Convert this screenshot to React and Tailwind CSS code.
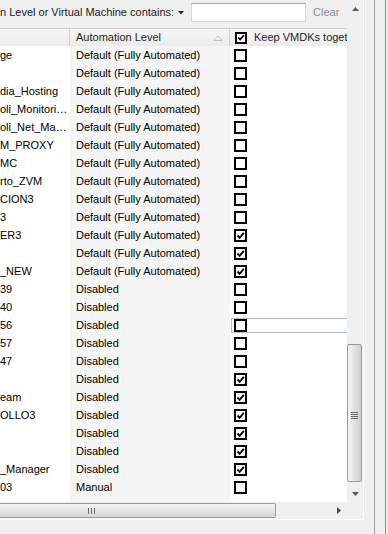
import React from 'react';

const DEF = 'Default (Fully Automated)';

const rows = [
  ['ge', DEF, false],
  ['', DEF, false],
  ['dia_Hosting', DEF, false],
  ['oli_Monitori…', DEF, false],
  ['oli_Net_Ma…', DEF, false],
  ['M_PROXY', DEF, false],
  ['MC', DEF, false],
  ['rto_ZVM', DEF, false],
  ['CION3', DEF, false],
  ['3', DEF, false],
  ['ER3', DEF, true],
  ['', DEF, true],
  ['_NEW', DEF, true],
  ['39', 'Disabled', false],
  ['40', 'Disabled', false],
  ['56', 'Disabled', false, true],
  ['57', 'Disabled', false],
  ['47', 'Disabled', false],
  ['', 'Disabled', true],
  ['eam', 'Disabled', true],
  ['OLLO3', 'Disabled', true],
  ['', 'Disabled', true],
  ['', 'Disabled', true],
  ['_Manager', 'Disabled', true],
  ['03', 'Manual', false],
];

function Check({ checked, small }) {
  return (
    <div className={`${small ? 'w-[12px] h-[12px]' : 'w-[13px] h-[13px]'} border-2 border-black bg-white flex items-center justify-center shrink-0`}>
      {checked && (
        <svg width="9" height="9" viewBox="0 0 9 9">
          <path d="M1.5 4.5 L3.6 6.8 L7.8 1.8" fill="none" stroke="#000" strokeWidth="1.9" />
        </svg>
      )}
    </div>
  );
}

function Row({ name, level, checked, focus }) {
  return (
    <div className="flex h-[18px] shrink-0">
      <div className="w-[70px] bg-white flex items-center overflow-hidden whitespace-nowrap text-black">{name}</div>
      <div className="w-[160px] bg-[#f5f5f5] flex items-center pl-[6px] text-black whitespace-nowrap">{level}</div>
      <div className="flex-1 bg-white flex items-center pl-[4px] relative">
        <Check checked={checked} />
        {focus && <div className="absolute left-[1px] right-0 top-[2px] bottom-[1px] border border-r-0 border-[#abbdd8]" />}
      </div>
    </div>
  );
}

export default function App() {
  return (
    <div className="w-[388px] h-[534px] bg-[#f0f0f0] flex overflow-hidden font-['Liberation_Sans',Arial,sans-serif] text-[11px] leading-none">
      {/* main panel */}
      <div className="w-[364px] h-[520px] flex border-r border-b border-white shrink-0">
        <div className="w-[347px] flex flex-col">
          {/* filter bar */}
          <div className="h-[28px] flex items-start shrink-0">
            <div className="h-[25px] flex items-center whitespace-nowrap text-[#1b1b1b]">
              n Level or Virtual Machine contains:
              <svg className="ml-[4px]" width="6" height="4" viewBox="0 0 6 4">
                <path d="M0 0 H6 L3 3.5 Z" fill="#222" />
              </svg>
            </div>
            <div className="ml-[7px] mt-[3px] w-[115px] h-[19px] bg-white border border-[#d6d9de] border-t-[#a6a6a6]" />
            <div className="ml-[7px] h-[25px] flex items-center text-[#8d8d8d]">Clear</div>
          </div>
          {/* header */}
          <div className="h-[18px] flex border-t border-[#cfcfcf] bg-gradient-to-b from-[#f7f7f7] to-[#ebebeb] shrink-0">
            <div className="w-[70px] border-r border-[#d2d2d2]" />
            <div className="w-[160px] border-r border-[#d2d2d2] flex items-center justify-between pl-[6px] pr-[6px] text-[#1e1e1e] whitespace-nowrap">
              Automation Level
              <svg width="10" height="6" viewBox="0 0 10 6">
                <path d="M0.5 5.5 L5 1 L9.5 5.5 Z" fill="none" stroke="#c4c4c4" strokeWidth="1" />
              </svg>
            </div>
            <div className="flex-1 flex items-center pl-[5px] overflow-hidden whitespace-nowrap text-[#1e1e1e]">
              <Check checked small />
              <span className="ml-[7px]">Keep VMDKs together</span>
            </div>
          </div>
          {/* body */}
          <div className="flex-1 flex flex-col overflow-hidden">
            {rows.map((r, i) => (
              <Row key={i} name={r[0]} level={r[1]} checked={r[2]} focus={r[3]} />
            ))}
            <div className="flex flex-1">
              <div className="w-[70px] bg-white" />
              <div className="w-[160px] bg-[#f5f5f5]" />
              <div className="flex-1 bg-white" />
            </div>
          </div>
          {/* horizontal scrollbar */}
          <div className="h-[17px] flex bg-[#f0f0f0] shrink-0">
            <div className="w-[276px] h-[15px] mt-[1px] border border-l-0 border-[#9a9a9a] rounded-r-[2px] bg-gradient-to-b from-[#f4f4f4] to-[#d6d6d6] flex items-center justify-center">
              <div className="flex gap-[2px] -ml-[92px]">
                <div className="w-px h-[6px] bg-[#6b6b6b]" />
                <div className="w-px h-[6px] bg-[#6b6b6b]" />
                <div className="w-px h-[6px] bg-[#6b6b6b]" />
              </div>
            </div>
            <div className="flex-1" />
            <div className="w-[17px] flex items-center justify-center">
              <svg width="4" height="7" viewBox="0 0 4 7">
                <path d="M0 0 L4 3.5 L0 7 Z" fill="#4a4a4a" />
              </svg>
            </div>
          </div>
        </div>
        {/* vertical scrollbar */}
        <div className="w-[16px] flex flex-col">
          <div className="h-[502px] flex flex-col bg-[#f0f0f0]">
            <div className="h-[17px] flex items-center justify-center shrink-0">
              <svg width="7" height="4" viewBox="0 0 7 4">
                <path d="M0 4 L3.5 0 L7 4 Z" fill="#5a5a5a" />
              </svg>
            </div>
            <div className="h-[327px] shrink-0" />
            <div className="h-[138px] w-[15px] shrink-0 border border-[#9a9a9a] rounded-[2px] bg-gradient-to-r from-[#f4f4f4] to-[#cfcfcf] flex items-center justify-center">
              <div className="flex flex-col gap-[1px] mt-[5px]">
                <div className="w-[7px] h-px bg-[#6b6b6b]" />
                <div className="w-[7px] h-px bg-[#6b6b6b]" />
                <div className="w-[7px] h-px bg-[#6b6b6b]" />
                <div className="w-[7px] h-px bg-[#6b6b6b]" />
              </div>
            </div>
            <div className="flex-1" />
            <div className="h-[17px] flex items-center justify-center shrink-0">
              <svg width="7" height="4" viewBox="0 0 7 4">
                <path d="M0 0 L7 0 L3.5 4 Z" fill="#5a5a5a" />
              </svg>
            </div>
          </div>
          <div className="flex-1 bg-[#f0f0f0]" />
        </div>
      </div>
      <div className="w-[10px] shrink-0" />
      <div className="w-px bg-[#9c9c9c] shrink-0" />
      <div className="w-[10px] shrink-0" />
      <div className="w-px bg-[#8a8a8a] shrink-0" />
      <div className="flex-1" />
    </div>
  );
}
